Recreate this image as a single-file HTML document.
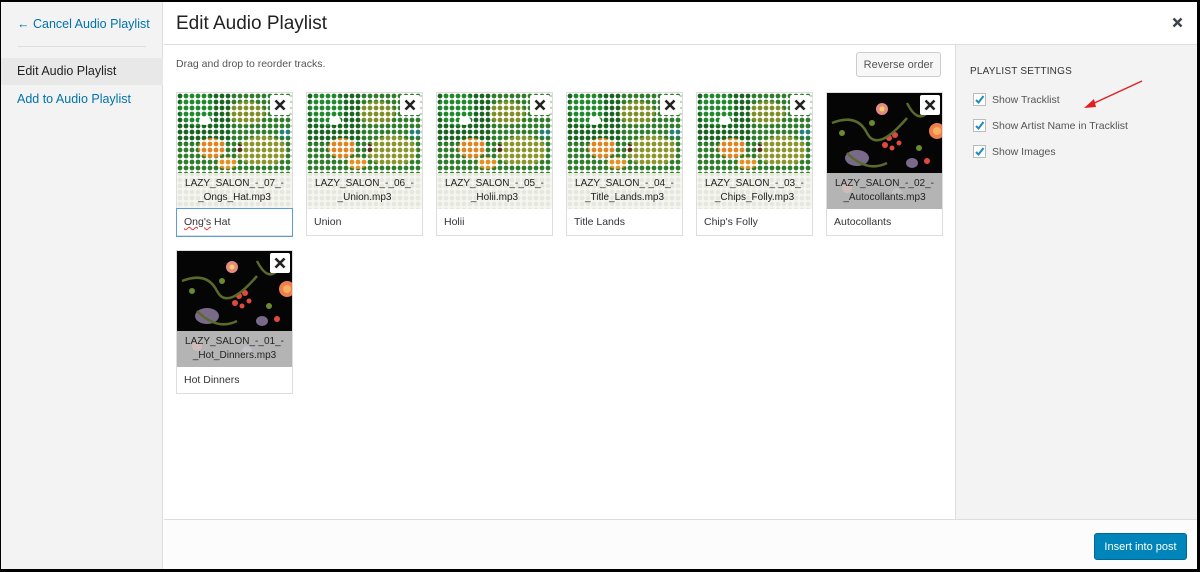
<!DOCTYPE html>
<html><head><meta charset="utf-8"><style>
*{box-sizing:border-box;margin:0;padding:0}
body{width:1200px;height:572px;background:#000;font-family:"Liberation Sans",sans-serif;position:relative;overflow:hidden}
#frame{position:absolute;left:1px;top:2px;width:1196px;height:567px;background:#fff}
#side{position:absolute;left:0;top:0;width:162px;height:567px;background:#f3f3f3;border-right:1px solid #ddd}
#side a{position:absolute;left:16px;font-size:12.5px;color:#0073aa}
#side .sep{position:absolute;left:17px;top:44px;width:128px;border-top:1px solid #ddd}
#side .cur{position:absolute;left:0;top:56px;width:162px;height:27px;background:#e8e8e8;font-size:12.5px;color:#222;padding:6px 16px}
#hdr{position:absolute;left:163px;top:0;right:0;height:43px;border-bottom:1px solid #ddd}
#hdr h1{position:absolute;left:12px;top:11px;font-size:19px;font-weight:normal;color:#222}
#close{position:absolute;left:1171px;top:15px}
#settings{position:absolute;left:954px;top:43px;width:242px;height:474px;background:#f3f3f3;border-left:1px solid #ddd}
#settings h3{position:absolute;left:14px;top:21px;font-size:10px;font-weight:normal;color:#333;letter-spacing:.2px}
.cb{position:absolute;left:17px;font-size:10.5px;color:#555}
.cb i{position:absolute;left:0;top:-2px;width:13px;height:13px;background:#fff;border:1px solid #bbb}
.cb span{position:absolute;left:19px;top:-1px;white-space:nowrap}
#foot{position:absolute;left:163px;top:517px;right:0;height:50px;background:#fcfcfc;border-top:1px solid #ddd}
#ins{position:absolute;right:10px;top:13px;width:93px;height:27px;background:#0085ba;border:1px solid #006799;border-radius:3px;color:#fff;font-size:11px;text-align:center;line-height:27px}
#drag{position:absolute;left:176px;top:58px;font-size:10.5px;color:#555}
#rev{position:absolute;left:856px;top:52px;width:85px;height:25px;background:#f7f7f7;border:1px solid #ccc;border-radius:3px;font-size:11px;color:#555;text-align:center;line-height:25px}
.tile{position:absolute;width:117px;height:144px;border:1px solid #ddd;background:#fff;overflow:hidden}
.tile svg.img{position:absolute;left:0;top:0;width:115px;height:116px}
.tile .cap{position:absolute;left:0;top:80px;width:115px;height:36px;font-size:10px;color:#222;text-align:center;line-height:14px;padding-top:4px;background:rgba(240,245,240,.78)}
.tile.dk .cap{background:rgba(205,205,205,.88)}
.tile .x{position:absolute;right:2px;top:2px;width:20px;height:20px;background:#fff;border-radius:2px}
.tile .t{position:absolute;left:0;top:116px;width:115px;height:27px;font-size:10.5px;color:#333;padding:7px 7px}
.tile.sel{overflow:visible}
.tile.sel .t{border:1px solid #5b9dd9;left:-1px;width:117px;top:115px;height:29px}
</style></head><body>
<svg width="0" height="0" style="position:absolute"><defs>
<pattern id="dots" width="6" height="6" patternUnits="userSpaceOnUse"><circle cx="3" cy="3" r="2.4" fill="#fff"/></pattern>
<mask id="dm"><rect width="117" height="116" fill="url(#dots)"/></mask>
<g id="green">
<rect width="117" height="116" fill="#fff"/>
<g mask="url(#dm)">
<rect width="117" height="116" fill="#2f7d2a"/>
<rect x="0" y="0" width="55" height="50" fill="#1a6422"/>
<circle cx="20" cy="15" r="18" fill="#1f8a2b"/>
<ellipse cx="70" cy="20" rx="18" ry="12" fill="#7e8f26"/>
<ellipse cx="85" cy="58" rx="25" ry="15" fill="#8a962a"/>
<ellipse cx="35" cy="55" rx="14" ry="10" fill="#e0841f"/>
<ellipse cx="50" cy="70" rx="10" ry="6" fill="#e5901f"/>
<circle cx="62" cy="55" r="4" fill="#5a2a1a"/>
<circle cx="108" cy="40" r="5" fill="#1e8080"/>
<rect x="0" y="80" width="117" height="36" fill="#d0b890"/>
</g>
<ellipse cx="28" cy="28" rx="6" ry="4" fill="#fff"/>
</g>
<g id="dark">
<rect width="117" height="116" fill="#050505"/>
<circle cx="55" cy="16" r="6" fill="#e48a86"/><circle cx="55" cy="16" r="2.5" fill="#f4d060"/>
<circle cx="110" cy="38" r="8" fill="#ef7e4c"/><circle cx="110" cy="38" r="4" fill="#f5b060"/>
<circle cx="62" cy="45" r="3" fill="#e04a3e"/><circle cx="68" cy="42" r="3" fill="#e04a3e"/><circle cx="58" cy="52" r="3" fill="#e04a3e"/><circle cx="65" cy="55" r="2.5" fill="#e04a3e"/><circle cx="72" cy="50" r="2.5" fill="#e04a3e"/>
<ellipse cx="30" cy="65" rx="12" ry="8" fill="#7a6a8a"/>
<ellipse cx="85" cy="70" rx="6" ry="5" fill="#7a6a8a"/>
<circle cx="100" cy="68" r="3" fill="#e04a3e"/>
<path d="M5 30 Q30 20 40 40 T80 25 M20 60 Q40 80 60 70 M80 10 Q90 30 100 20" stroke="#5a6a2a" stroke-width="2.5" fill="none"/>
<circle cx="15" cy="40" r="3" fill="#6a8a30"/><circle cx="45" cy="30" r="3" fill="#6a8a30"/><circle cx="92" cy="55" r="3" fill="#6a8a30"/>
<circle cx="20" cy="95" r="5" fill="#e04a3e"/><circle cx="70" cy="100" r="5" fill="#7a6a8a"/>
</g>
<g id="xi"><path d="M5.5 5.5L14.5 14.5M14.5 5.5L5.5 14.5" stroke="#222" stroke-width="2.6"/></g>
</defs></svg>
<div id="frame">
<div id="side">
<a style="top:15px">← Cancel Audio Playlist</a>
<div class="sep"></div>
<div class="cur">Edit Audio Playlist</div>
<a style="top:90px">Add to Audio Playlist</a>
</div>
<div id="hdr"><h1>Edit Audio Playlist</h1></div>
<svg id="close" width="11" height="11"><path d="M1.5 1.5L9.5 9.5M9.5 1.5L1.5 9.5" stroke="#3c434a" stroke-width="2.4"/></svg>
<div id="settings">
<h3>PLAYLIST SETTINGS</h3>
<div class="cb" style="top:50px"><i><svg width="11" height="11"><path d="M2 6L4.5 8.5L9.5 2" stroke="#1e8cbe" stroke-width="2" fill="none"/></svg></i><span>Show Tracklist</span></div>
<div class="cb" style="top:76px"><i><svg width="11" height="11"><path d="M2 6L4.5 8.5L9.5 2" stroke="#1e8cbe" stroke-width="2" fill="none"/></svg></i><span>Show Artist Name in Tracklist</span></div>
<div class="cb" style="top:102px"><i><svg width="11" height="11"><path d="M2 6L4.5 8.5L9.5 2" stroke="#1e8cbe" stroke-width="2" fill="none"/></svg></i><span>Show Images</span></div>
<svg style="position:absolute;left:120px;top:32px" width="70" height="40"><path d="M66 4L14 28" stroke="#e21f1f" stroke-width="1.5"/><path d="M8 31L18 22L20 30Z" fill="#e21f1f"/></svg>
</div>
<div id="foot"><div id="ins">Insert into post</div></div>
</div>
<div id="drag">Drag and drop to reorder tracks.</div>
<div id="rev">Reverse order</div>

<div class="tile sel" style="left:176px;top:92px"><svg class="img"><use href="#green"/></svg><div class="cap">LAZY_SALON_-_07_-<br>_Ongs_Hat.mp3</div><svg class="x"><use href="#xi"/></svg><div class="t"><span style="text-decoration:underline wavy #e33;text-decoration-thickness:1px">Ong's</span> Hat</div></div>
<div class="tile" style="left:306px;top:92px"><svg class="img"><use href="#green"/></svg><div class="cap">LAZY_SALON_-_06_-<br>_Union.mp3</div><svg class="x"><use href="#xi"/></svg><div class="t">Union</div></div>
<div class="tile" style="left:436px;top:92px"><svg class="img"><use href="#green"/></svg><div class="cap">LAZY_SALON_-_05_-<br>_Holii.mp3</div><svg class="x"><use href="#xi"/></svg><div class="t">Holii</div></div>
<div class="tile" style="left:566px;top:92px"><svg class="img"><use href="#green"/></svg><div class="cap">LAZY_SALON_-_04_-<br>_Title_Lands.mp3</div><svg class="x"><use href="#xi"/></svg><div class="t">Title Lands</div></div>
<div class="tile" style="left:696px;top:92px"><svg class="img"><use href="#green"/></svg><div class="cap">LAZY_SALON_-_03_-<br>_Chips_Folly.mp3</div><svg class="x"><use href="#xi"/></svg><div class="t">Chip's Folly</div></div>
<div class="tile dk" style="left:826px;top:92px"><svg class="img"><use href="#dark"/></svg><div class="cap">LAZY_SALON_-_02_-<br>_Autocollants.mp3</div><svg class="x"><use href="#xi"/></svg><div class="t">Autocollants</div></div>
<div class="tile dk" style="left:176px;top:250px"><svg class="img"><use href="#dark"/></svg><div class="cap">LAZY_SALON_-_01_-<br>_Hot_Dinners.mp3</div><svg class="x"><use href="#xi"/></svg><div class="t">Hot Dinners</div></div>
</body></html>
